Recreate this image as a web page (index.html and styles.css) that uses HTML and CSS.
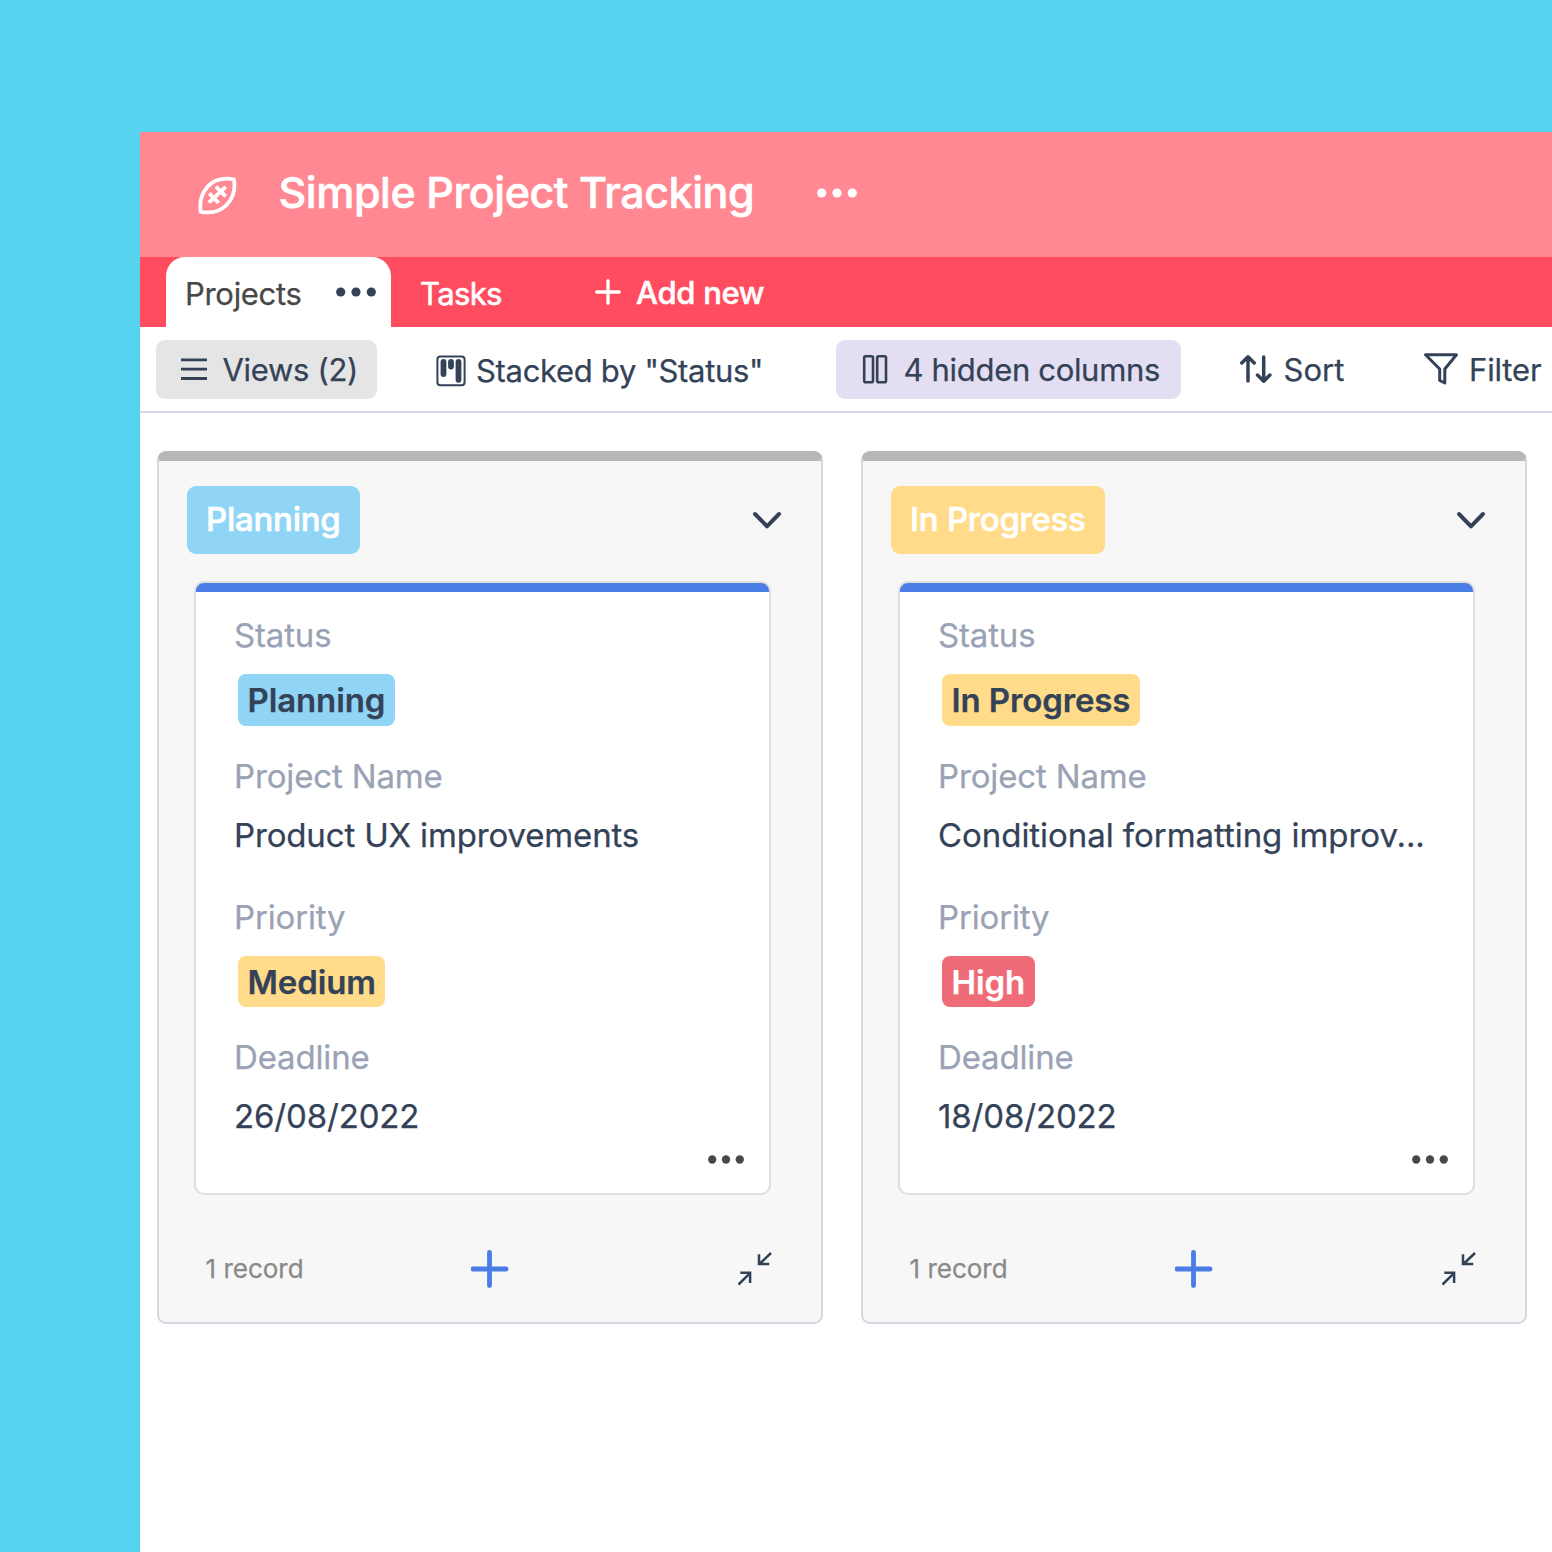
FILE: index.html
```html
<!DOCTYPE html>
<html lang="en">
<head>
<meta charset="utf-8">
<title>Simple Project Tracking</title>
<link rel="stylesheet" href="styles.css">
</head>
<body>
<svg class="defs" aria-hidden="true">
  <symbol id="dots" viewBox="0 0 40 10"><circle cx="4.7" cy="5" r="4.6"/><circle cx="20" cy="5" r="4.6"/><circle cx="35.3" cy="5" r="4.6"/></symbol>
  <symbol id="chevron" viewBox="0 0 32 20"><path d="M4 4l12 12.3L28 4" fill="none" stroke="currentColor" stroke-width="4" stroke-linecap="round" stroke-linejoin="round"/></symbol>
  <symbol id="plus" viewBox="0 0 38 38"><path d="M18.500 2.400v33.200M1.900 19h33.200" fill="none" stroke="currentColor" stroke-width="4.800" stroke-linecap="round"/></symbol>
  <symbol id="collapse" viewBox="0 0 36 36"><path d="M34 2L22.500 13M22 3.200v9.800h10.300M1.500 33.500L12.500 22.700M3.300 21.800h9.800v10.300" fill="none" stroke="currentColor" stroke-width="2.500"/></symbol>
</svg>
<main class="app">
  <header class="header">
    <svg class="logo" viewBox="0 0 40 40" fill="none" stroke="currentColor"><path stroke-width="3.800" stroke-linejoin="round" d="M2.800 35.800C1.400 28 3 18 10 10.200C16.500 3.200 26 1.700 36 3.300C37.500 12.500 35.500 21.500 29 28.500C22.500 35.500 12.500 37.500 2.800 35.800Z"/><path stroke-width="3.900" d="M10.800 26.700L27.700 10.800M11.300 17.300L20.700 27M18 10.600L27.700 20.300"/></svg>
    <h1 class="title">Simple Project Tracking</h1>
    <svg class="dots"><use href="#dots"/></svg>
  </header>
  <nav class="tabs">
    <div class="tab tab-active"><span>Projects</span><svg class="dots"><use href="#dots"/></svg></div>
    <div class="tab tab-tasks">Tasks</div>
    <div class="tab tab-add"><svg class="add-icon" viewBox="0 0 26 26" fill="none" stroke="currentColor" stroke-width="3.300" stroke-linecap="round"><path d="M13 1.700v22.600M1.700 13h22.600"/></svg><span>Add new</span></div>
  </nav>
  <div class="toolbar">
    <div class="tool views"><svg viewBox="0 0 26 24" width="26" height="24" fill="none" stroke="currentColor" stroke-width="2.800"><path d="M0 2.800h26M0 12.200h26M0 21.500h26"/></svg><span>Views (2)</span></div>
    <div class="tool stacked"><svg viewBox="0 0 30 32" width="30" height="32"><rect x="1.400" y="1.400" width="27.200" height="28.800" rx="3" fill="none" stroke="currentColor" stroke-width="2"/><path d="M7.500 7v12M15 7v4.500M22.500 7v17.800" fill="none" stroke="currentColor" stroke-width="5.800" stroke-linecap="round"/></svg><span>Stacked by "Status"</span></div>
    <div class="tool hidden-cols"><svg viewBox="0 0 26 30" width="26" height="30" fill="none" stroke="currentColor" stroke-width="2.600"><rect x="2.200" y="2.200" width="8.800" height="26" rx="1.500"/><rect x="15.200" y="2.200" width="8.800" height="26" rx="1.500"/></svg><span>4 hidden columns</span></div>
    <div class="tool sort"><svg viewBox="0 0 34 30" width="34" height="30" fill="none" stroke="currentColor" stroke-width="3.500" stroke-linecap="round" stroke-linejoin="round"><path d="M9 27V3M2.800 9L9 2.800L15.200 9M24.700 3v24M18.500 21l6.200 6.200L30.900 21"/></svg><span>Sort</span></div>
    <div class="tool filter"><svg viewBox="0 0 36 34" width="36" height="34" fill="none" stroke="currentColor" stroke-width="3" stroke-linejoin="round"><path d="M2.500 2.700h31L21.800 17v14L16.700 28.500V17Z"/></svg><span>Filter</span></div>
  </div>
  <div class="board">
    <section class="column">
      <div class="column-head"><span class="group-tag blue">Planning</span><svg class="chevron"><use href="#chevron"/></svg></div>
      <article class="card">
        <div class="field"><div class="label">Status</div><div class="tag blue">Planning</div></div>
        <div class="field"><div class="label">Project Name</div><div class="value">Product UX improvements</div></div>
        <div class="field"><div class="label">Priority</div><div class="tag yellow">Medium</div></div>
        <div class="field"><div class="label">Deadline</div><div class="value">26/08/2022</div></div>
        <svg class="card-dots"><use href="#dots"/></svg>
      </article>
      <footer class="column-foot"><span class="count">1 record</span><svg class="plus"><use href="#plus"/></svg><svg class="collapse"><use href="#collapse"/></svg></footer>
    </section>
    <section class="column">
      <div class="column-head"><span class="group-tag yellow">In Progress</span><svg class="chevron"><use href="#chevron"/></svg></div>
      <article class="card">
        <div class="field"><div class="label">Status</div><div class="tag yellow">In Progress</div></div>
        <div class="field"><div class="label">Project Name</div><div class="value value-long">Conditional formatting improv...</div></div>
        <div class="field"><div class="label">Priority</div><div class="tag red">High</div></div>
        <div class="field"><div class="label">Deadline</div><div class="value">18/08/2022</div></div>
        <svg class="card-dots"><use href="#dots"/></svg>
      </article>
      <footer class="column-foot"><span class="count">1 record</span><svg class="plus"><use href="#plus"/></svg><svg class="collapse"><use href="#collapse"/></svg></footer>
    </section>
  </div>
</main>
</body>
</html>
```
FILE: styles.css
```css
* { box-sizing: border-box; }
body {
  margin: 0;
  height: 1552px;
  padding: 131.5px 0 0 140px;
  overflow: hidden;
  background: #56d3ef;
  font-family: Inter, "Liberation Sans", sans-serif;
  color: #344258;
  -webkit-text-stroke: 0.25px currentColor;
}
svg { display: block; flex: none; }
svg.defs { display: none; }
.app { width: 1412px; height: 1421px; background: #fff; overflow: hidden; white-space: nowrap; }

.header { height: 125px; padding: 0 0 4px 58px; display: flex; align-items: center; background: #ff8893; color: #fff; }
.logo { width: 40px; height: 40px; margin-top: 7px; }
.title { margin: 0 0 0 40.5px; width: 538px; font-size: 43px; line-height: 51px; font-weight: 500; letter-spacing: -0.45px; -webkit-text-stroke-width: 0.6px; }
.dots { width: 40px; height: 10px; fill: currentColor; }
.header .dots { margin-top: 2px; }

.tabs { height: 70.5px; padding-left: 26px; display: flex; background: #ff4c5e; color: #fff; font-size: 31px; line-height: 73px; }
.tab-active { width: 225px; padding: 0 15px 0 19px; display: flex; justify-content: space-between; background: #fff; color: #484848; border-radius: 19px 19px 0 0; letter-spacing: -0.3px; }
.tab-active .dots { margin-top: 30.5px; color: #344258; }
.tab-tasks { width: 175px; padding-left: 29px; letter-spacing: -0.6px; -webkit-text-stroke-width: 0.6px; }
.tab-add { padding-left: 29px; display: flex; gap: 15px; font-weight: 500; letter-spacing: -0.3px; -webkit-text-stroke-width: 0.5px; }
.add-icon { width: 26px; height: 26px; margin-top: 22px; }
.tab-add span { line-height: 71px; }

.toolbar { height: 86px; padding: 13px 0 0 16px; display: flex; align-items: flex-start; border-bottom: 2px solid #d2d7e1; font-size: 31px; letter-spacing: -0.32px; }
.tool { height: 58.5px; display: flex; align-items: center; border-radius: 9px; }
.views { width: 221px; padding-left: 25px; gap: 15.5px; background: #e5e5e5; }
.stacked { width: 327px; margin: 1px 0 0 59px; gap: 10px; }
.stacked svg { margin-top: 2px; }
.hidden-cols { width: 344.5px; margin-left: 73px; padding-left: 26px; gap: 15.5px; background: #e3def1; }
.sort { width: 184px; margin-left: 58px; gap: 11px; letter-spacing: 0; }
.filter { gap: 10.5px; letter-spacing: -0.15px; }

.board { padding: 38px 0 0 17px; display: flex; gap: 38px; }
.column { width: 666px; height: 873px; border: 2px solid #d2d7e1; border-top: 10px solid #b7b7b7; border-radius: 9px; background: #f7f7f7; flex: none; }
.column-head { height: 120px; padding: 24.5px 38.5px 0 28px; display: flex; justify-content: space-between; align-items: flex-start; }
.group-tag { height: 68px; padding: 0 19px; border-radius: 9px; font-size: 33px; line-height: 67px; font-weight: 500; letter-spacing: -0.25px; color: #fff; -webkit-text-stroke-width: 0.6px; }
.blue { background: #91d5f6; }
.yellow { background: #ffdb8a; }
.red { background: #ef6b78; color: #fff; }
.chevron { width: 32px; height: 20px; margin-top: 24.3px; }
.card { width: 577px; height: 614px; margin-left: 35px; padding: 32px 38px 0; border: 2px solid #dedede; border-radius: 10px; background: linear-gradient(#4b7de6 0 9px, #fff 9px); position: relative; }
.field { height: 140.8px; }
.label, .value { font-size: 33px; line-height: 40px; letter-spacing: -0.15px; }
.label { color: #9aa3b5; }
.value { margin-top: 18.8px; }
.value-long { letter-spacing: -0.05px; }
.tag { width: fit-content; height: 51.5px; margin: 19.2px 0 0 4px; padding: 0 9.5px; border-radius: 8px; font-size: 33px; line-height: 52.3px; font-weight: 600; letter-spacing: -0.12px; }
.card-dots { width: 36px; height: 9px; position: absolute; right: 24.8px; bottom: 28.8px; fill: #484848; }
.column-foot { height: 38px; margin-top: 55px; padding-left: 46.5px; display: flex; align-items: center; color: #898989; font-size: 26px; }
.count { width: 265px; line-height: 30px; margin-top: -1px; }
.plus { width: 38px; height: 38px; color: #4b7de6; }
.collapse { width: 36px; height: 36px; margin-left: 228px; color: #344258; }
```
